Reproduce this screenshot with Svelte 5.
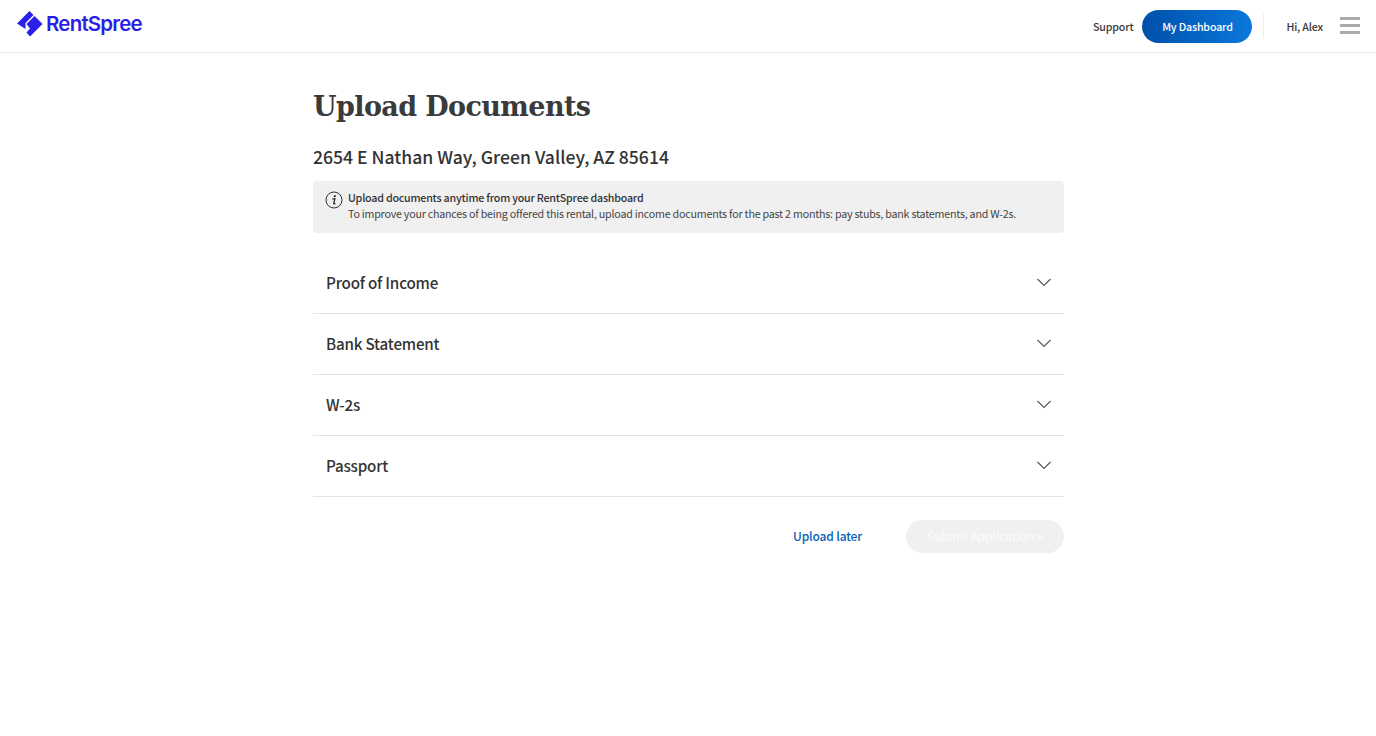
<script>
  const sections = ['Proof of Income', 'Bank Statement', 'W-2s', 'Passport']
</script>

<header class="topbar">
  <a class="logo" href="#top">
    <svg width="28" height="28" viewBox="0 0 28 28" aria-hidden="true">
      <path d="M1 13.5 L13.5 1 L17.5 5 L9.5 13 L9.5 19 Z" fill="#2a1fe8" />
      <path d="M10.5 14 L18.5 6 L26.5 14 L14 26.5 L10.5 22.5 L14 18.5 Z" fill="#2a1fe8" />
    </svg>
    <span>RentSpree</span>
  </a>
  <nav class="nav">
    <a class="support" href="#top">Support</a>
    <a class="dash" href="#top">My Dashboard</a>
    <span class="sep"></span>
    <span class="hi">Hi, Alex</span>
    <span class="burger"><i></i><i></i><i></i></span>
  </nav>
</header>

<main class="page">
  <h1>Upload Documents</h1>
  <h2>2654 E Nathan Way, Green Valley, AZ 85614</h2>

  <div class="notice">
    <svg width="18" height="18" viewBox="0 0 18 18" aria-hidden="true">
      <circle cx="9" cy="9" r="8" fill="none" stroke="#333" stroke-width="1" />
      <circle cx="9.8" cy="5.2" r="1.1" fill="#333" />
      <path d="M7.4 8.2 Q8.6 7.4 9.9 7.6 L8.7 12.4 Q8.6 13.4 10.4 12.4" fill="none" stroke="#333" stroke-width="1.3" />
    </svg>
    <div>
      <strong>Upload documents anytime from your RentSpree dashboard</strong>
      <p>To improve your chances of being offered this rental, upload income documents for the past 2 months: pay stubs, bank statements, and W-2s.</p>
    </div>
  </div>

  <div class="sections">
    {#each sections as name}
      <div class="row">
        <span>{name}</span>
        <svg width="14" height="9" viewBox="0 0 14 9" aria-hidden="true">
          <path d="M0.5 1 L7 7.5 L13.5 1" fill="none" stroke="#555" stroke-width="1.1" />
        </svg>
      </div>
    {/each}
  </div>

  <div class="actions">
    <a class="later" href="#top">Upload later</a>
    <button class="submit" disabled>Submit Application &gt;</button>
  </div>
</main>

<style>
  :global(body) {
    margin: 0;
    background: #fff;
    color: #333;
    font-family: "Noto Sans CJK JP", "Noto Sans", sans-serif;
  }
  a {
    text-decoration: none;
  }
  .topbar {
    height: 52px;
    border-bottom: 1px solid #e8e8e8;
    display: flex;
    align-items: center;
    justify-content: space-between;
    padding: 0 16px;
  }
  .logo {
    display: flex;
    align-items: center;
    gap: 2px;
    margin-top: -5px;
    color: #2a1fe8;
    font-family: Inter, sans-serif;
    font-size: 20.5px;
    font-weight: 600;
    letter-spacing: -0.8px;
  }
  .nav {
    display: flex;
    align-items: center;
    font-size: 10.7px;
    letter-spacing: -0.18px;
    font-weight: 500;
    color: #3a3a3a;
  }
  .support {
    color: inherit;
    margin-right: 9px;
  }
  .dash {
    width: 110px;
    height: 33px;
    border-radius: 17px;
    background: linear-gradient(90deg, #0050aa, #0a78dc);
    color: #fff;
    display: flex;
    align-items: center;
    justify-content: center;
  }
  .sep {
    width: 1px;
    height: 24px;
    background: #eee;
    margin: 0 22px 0 11px;
  }
  .burger {
    display: flex;
    flex-direction: column;
    gap: 4px;
    margin-left: 17px;
    margin-top: -2px;
  }
  .burger i {
    width: 20px;
    height: 3px;
    background: #aaa;
  }
  .page {
    width: 751px;
    margin: 0 0 0 313px;
  }
  h1 {
    margin: 33px 0 0;
    font-family: "DejaVu Serif", serif;
    font-size: 27px;
    line-height: 42px;
    font-weight: 700;
    letter-spacing: -0.6px;
    color: #3a3a3a;
  }
  h2 {
    margin: 14px 0 0;
    font-size: 17.6px;
    line-height: 30px;
    font-weight: 500;
    color: #333;
  }
  .notice {
    margin-top: 9px;
    height: 52px;
    box-sizing: border-box;
    background: #f0f0f0;
    border-radius: 4px;
    padding: 9px 12px;
    display: flex;
    gap: 5px;
    font-size: 10.7px;
    letter-spacing: -0.22px;
    line-height: 16px;
  }
  .notice svg {
    margin-top: 1px;
    flex: none;
  }
  .notice strong {
    font-weight: 500;
  }
  .notice p {
    margin: 0;
    color: #444;
  }
  .sections {
    margin-top: 20px;
  }
  .row {
    height: 60px;
    border-bottom: 1px solid #e4e4e4;
    display: flex;
    align-items: center;
    justify-content: space-between;
    padding: 0 13px;
    font-size: 15.2px;
    letter-spacing: -0.2px;
    font-weight: 500;
  }
  .row span {
    margin-top: -3px;
  }
  .row svg {
    margin-top: -1px;
  }
  .actions {
    margin-top: 23px;
    display: flex;
    align-items: center;
    justify-content: flex-end;
  }
  .later {
    color: #0a5fb4;
    font-size: 12px;
    letter-spacing: -0.15px;
    font-weight: 500;
    margin: 0 44px 2px 0;
  }
  .submit {
    width: 158px;
    height: 33px;
    padding: 0 0 2px;
    border: 0;
    border-radius: 17px;
    background: #f0f0f0;
    color: #fafafa;
    font: inherit;
    font-size: 12px;
    letter-spacing: -0.15px;
    font-weight: 500;
  }
</style>
